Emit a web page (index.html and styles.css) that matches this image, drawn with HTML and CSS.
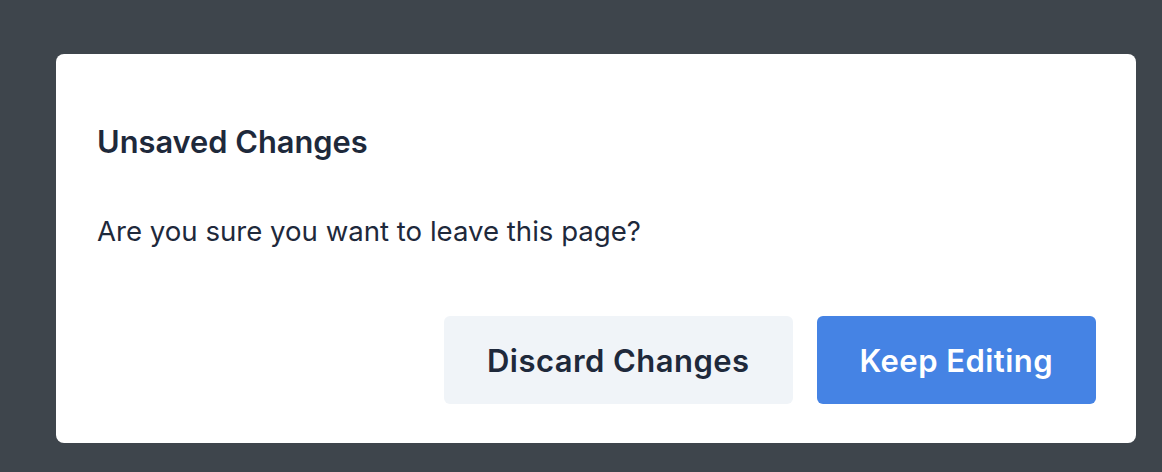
FILE: index.html
```html
<!DOCTYPE html>
<html lang="en">
<head>
<meta charset="utf-8">
<title>Unsaved Changes</title>
<link rel="stylesheet" href="styles.css">
</head>
<body>
<div class="backdrop">
  <div class="modal" role="dialog" aria-labelledby="modal-title">
    <h2 class="modal-title" id="modal-title">Unsaved Changes</h2>
    <p class="modal-text">Are you sure you want to leave this page?</p>
    <div class="modal-actions">
      <button class="btn btn-secondary" type="button">Discard Changes</button>
      <button class="btn btn-primary" type="button">Keep Editing</button>
    </div>
  </div>
</div>
</body>
</html>
```
FILE: styles.css
```css
* { box-sizing: border-box; }
html, body {
  margin: 0;
  height: 100%;
}
body {
  background: #3e454c;
  font-family: Inter, "Noto Sans", sans-serif;
  color: #1e293b;
}
.backdrop {
  padding: 54px 26px 0 56px;
}
.modal {
  background: #ffffff;
  border-radius: 8px;
  height: 389px;
  padding: 68px 40px 39px 41px;
  display: flex;
  flex-direction: column;
}
.modal-title {
  margin: 0;
  font-size: 30.8px;
  line-height: 40px;
  font-weight: 600;
}
.modal-text {
  margin: 51px 0 0;
  font-size: 27.6px;
  line-height: 36px;
  font-weight: 400;
}
.modal-actions {
  margin-top: auto;
  display: flex;
  justify-content: flex-end;
  gap: 24px;
}
.btn {
  height: 88px;
  padding: 0 43px;
  border: 0;
  border-radius: 6px;
  font-family: inherit;
  font-size: 31px;
  letter-spacing: 0.45px;
  font-weight: 600;
  cursor: pointer;
}
.btn-secondary {
  background: #f0f4f8;
  color: #1e293b;
}
.btn-primary {
  background: #4583e4;
  color: #ffffff;
}
```
